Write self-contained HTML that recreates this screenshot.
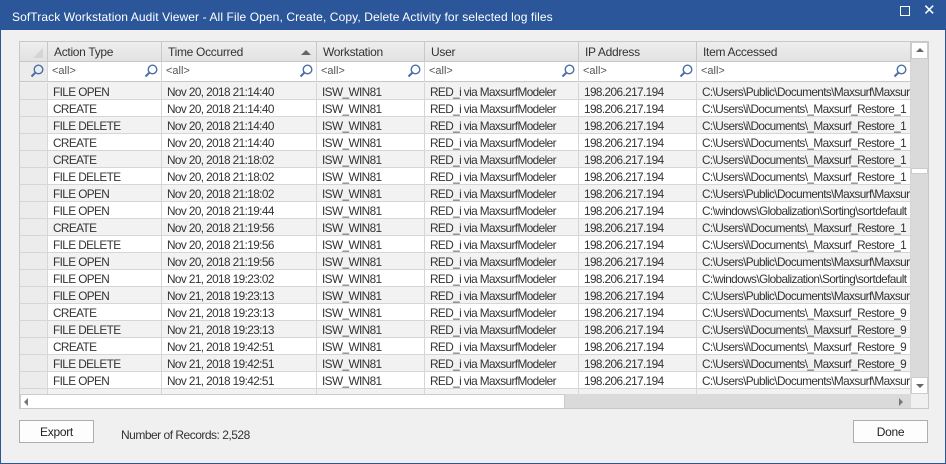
<!DOCTYPE html>
<html><head><meta charset="utf-8"><style>
*{margin:0;padding:0;box-sizing:border-box}
body{width:946px;height:464px;overflow:hidden;background:#2b579a;font-family:"Liberation Sans",sans-serif;font-size:12px;color:#333;position:relative}
.win{position:absolute;left:1px;top:30px;width:944px;height:433px;background:#f0f0f0}
.title{position:absolute;left:12px;top:10px;color:#fff;font-size:12px;letter-spacing:0.1px}
.grid{position:absolute;left:19px;top:41px;width:910px;height:368px;border:1px solid #c8c8c8;background:#f0f0f0;overflow:hidden}
.a{position:absolute;white-space:nowrap;overflow:hidden}
.hd{background:linear-gradient(#eeeeee,#e2e2e2);border-right:1px solid #c8c8c8;border-bottom:1px solid #c8c8c8;height:20px;padding:3px 6px;color:#333;letter-spacing:-0.3px}
.fl{background:#fff;border-right:1px solid #d6d6d6;border-bottom:1px solid #c8c8c8;height:20px;padding:3px 4px;color:#555;font-size:11px}
.c{height:17px;border-right:1px solid #d6d6d6;border-bottom:1px solid #d6d6d6;padding:2px 5px;letter-spacing:-0.6px;font-size:11.8px}
.btn{position:absolute;background:#fdfdfd;border:1px solid #adadad;text-align:center;line-height:22px;color:#222;letter-spacing:-0.3px}
</style></head><body>
<div class="title">SofTrack Workstation Audit Viewer - All File Open, Create, Copy, Delete Activity for selected log files</div>
<div style="position:absolute;left:900px;top:6px;width:10px;height:10px;border:1.5px solid #fff"></div>
<div style="position:absolute;left:923px;top:1px;color:#fff;font-size:15px">✕</div>
<div class="win"></div>
<div class="grid" id="g"></div>
<div class="btn" style="left:19px;top:420px;width:75px;height:23px">Export</div>
<div class="a" style="left:121px;top:428px;letter-spacing:-0.5px">Number of Records: 2,528</div>
<div class="btn" style="left:853px;top:420px;width:75px;height:23px">Done</div>
<script>
const g=document.getElementById('g');
const cols=[[0,28],[28,114],[142,155],[297,108],[405,154],[559,118],[677,214]];
const heads=['','Action Type','Time Occurred','Workstation','User','IP Address','Item Accessed'];
let h='';
const mag='<svg width="14" height="14" style="position:absolute;right:3px;top:2px" viewBox="0 0 14 14"><circle cx="8.5" cy="5.5" r="4.3" fill="none" stroke="#4a6fa5" stroke-width="1.4"/><line x1="5.5" y1="8.5" x2="1.5" y2="12.5" stroke="#4a6fa5" stroke-width="2"/></svg>';
cols.forEach((c,i)=>{
 h+=`<div class="a hd" style="left:${c[0]}px;top:0;width:${c[1]}px">${heads[i]}${i==0?'<div style="position:absolute;right:4px;bottom:3px;width:0;height:0;border-left:10px solid transparent;border-bottom:10px solid #d4d4d4"></div>':''}${i==2?'<div style="position:absolute;right:5px;top:8px;width:0;height:0;border-left:5px solid transparent;border-right:5px solid transparent;border-bottom:5px solid #666"></div>':''}</div>`;
 h+=`<div class="a fl" style="left:${c[0]}px;top:20px;width:${c[1]}px;${i==0?'background:#ececec':''}">${i==0?'':'&lt;all&gt;'}${mag}</div>`;
});
const P='C:\\Users\\Public\\Documents\\Maxsurf\\Maxsurf',R1='C:\\Users\\i\\Documents\\_Maxsurf_Restore_1',R9='C:\\Users\\i\\Documents\\_Maxsurf_Restore_9',S='C:\\windows\\Globalization\\Sorting\\sortdefault';
const rows=[['FILE OPEN','Nov 20, 2018 21:14:40',P],['CREATE','Nov 20, 2018 21:14:40',R1],['FILE DELETE','Nov 20, 2018 21:14:40',R1],['CREATE','Nov 20, 2018 21:14:40',R1],['CREATE','Nov 20, 2018 21:18:02',R1],['FILE DELETE','Nov 20, 2018 21:18:02',R1],['FILE OPEN','Nov 20, 2018 21:18:02',P],['FILE OPEN','Nov 20, 2018 21:19:44',S],['CREATE','Nov 20, 2018 21:19:56',R1],['FILE DELETE','Nov 20, 2018 21:19:56',R1],['FILE OPEN','Nov 20, 2018 21:19:56',P],['FILE OPEN','Nov 21, 2018 19:23:02',S],['FILE OPEN','Nov 21, 2018 19:23:13',P],['CREATE','Nov 21, 2018 19:23:13',R9],['FILE DELETE','Nov 21, 2018 19:23:13',R9],['CREATE','Nov 21, 2018 19:42:51',R9],['FILE DELETE','Nov 21, 2018 19:42:51',R9],['FILE OPEN','Nov 21, 2018 19:42:51',P],['','','']];
rows.forEach((r,j)=>{
 const y=41+j*17,bg=j%2==0?'#f2f2f2':'#fff';
 const v=['',r[0],r[1],r[0]?'ISW_WIN81':'',r[0]?'RED_i via MaxsurfModeler':'',r[0]?'198.206.217.194':'',r[2]];
 cols.forEach((c,i)=>{h+=`<div class="a c" style="left:${c[0]}px;top:${y}px;width:${c[1]}px;background:${i==0?'#ececec':bg}">${v[i]}</div>`;});
});
h+='<div class="a" style="left:891px;top:0;width:17px;height:352px;background:#dadada"></div>';
h+='<div class="a" style="left:891px;top:0;width:17px;height:17px;background:#fff;border:1px solid #ccc"><div style="margin:5px auto;width:0;height:0;border-left:4px solid transparent;border-right:4px solid transparent;border-bottom:4px solid #666"></div></div>';
h+='<div class="a" style="left:891px;top:126px;width:17px;height:6px;background:#fff;border:1px solid #ccc"></div>';
h+='<div class="a" style="left:891px;top:335px;width:17px;height:17px;background:#fff;border:1px solid #ccc"><div style="margin:6px auto;width:0;height:0;border-left:4px solid transparent;border-right:4px solid transparent;border-top:4px solid #666"></div></div>';
h+='<div class="a" style="left:0;top:352px;width:891px;height:16px;background:#dadada"></div>';
h+='<div class="a" style="left:0;top:352px;width:545px;height:16px;background:#fff;border:1px solid #ccc"></div>';
h+='<div class="a" style="left:4px;top:356px;width:0;height:0;border-top:4px solid transparent;border-bottom:4px solid transparent;border-right:4px solid #777"></div>';
h+='<div class="a" style="left:879px;top:356px;width:0;height:0;border-top:4px solid transparent;border-bottom:4px solid transparent;border-left:4px solid #777"></div>';
g.innerHTML=h;
</script>
</body></html>
